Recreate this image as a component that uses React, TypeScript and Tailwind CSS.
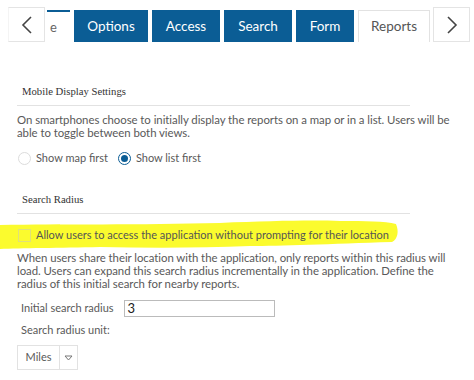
import React from 'react';

const tabs = ['Options', 'Access', 'Search', 'Form'];

function Heading({ children }: { children: React.ReactNode }) {
  return (
    <div className="border-b border-[#e2e2e2] mr-[64px] pl-[5px] pb-[5px] text-[10.7px] leading-[17px] text-[#333]" style={{ fontFamily: '"Liberation Serif", serif' }}>
      {children}
    </div>
  );
}

export default function App() {
  return (
    <div className="relative w-[474px] h-[380px] overflow-hidden bg-white text-[#595959]" style={{ fontFamily: 'Lato, "Open Sans", sans-serif' }}>
      {/* tab strip */}
      <div className="flex items-end pt-[7px] pl-[8px]">
        <button className="w-[37px] h-[35px] border border-[#e4e4e4] border-l-[#f4f4f4] bg-white flex items-center justify-center text-[#444]">
          <svg width="12" height="18" viewBox="0 0 12 18" fill="none" stroke="currentColor" strokeWidth="1.6">
            <path d="M10 1 L2 9 L10 17" />
          </svg>
        </button>
        <div className="w-[23px] h-[32px] border-t-2 border-[#0b5d95] ml-[2px] bg-white text-[13px] pl-[3px] leading-[30px] text-[#666]">e</div>
        {tabs.map((t, i) => (
          <div key={t} className={`h-[32px] bg-[#0b5d95] text-white text-[13.5px] flex items-center justify-center ${i === 0 ? 'ml-[4px] w-[74px]' : i === 3 ? 'ml-[4px] w-[58px]' : 'ml-[4px] w-[68px]'}`}>
            {t}
          </div>
        ))}
        <div className="ml-[4px] w-[72px] h-[32px] border border-b-0 border-[#e2e2e2] bg-white text-[13.5px] text-[#555] flex items-center justify-center">Reports</div>
        <button className="ml-[3px] w-[37px] h-[35px] border border-[#e4e4e4] bg-white flex items-center justify-center text-[#444]">
          <svg width="12" height="18" viewBox="0 0 12 18" fill="none" stroke="currentColor" strokeWidth="1.6">
            <path d="M2 1 L10 9 L2 17" />
          </svg>
        </button>
      </div>

      <div className="pl-[17px] pt-[41px]">
        <Heading>Mobile Display Settings</Heading>
        <p className="mt-[7px] text-[11.4px] leading-[13px] pr-[20px] tracking-[-0.05px]">
          On smartphones choose to initially display the reports on a map or in a list. Users will be able to toggle between both views.
        </p>
        <div className="mt-[11px] flex items-center text-[11px] leading-[16px]">
          <span className="w-[13px] h-[13px] rounded-full border border-[#dcdcdc] ml-[1px]" />
          <span className="ml-[5px]">Show map first</span>
          <span className="ml-[10px] w-[13px] h-[13px] rounded-full border border-[#0b5d95] flex items-center justify-center">
            <span className="w-[7px] h-[7px] rounded-full bg-[#0b5d95]" />
          </span>
          <span className="ml-[5px]">Show list first</span>
        </div>

        <div className="mt-[25px]">
          <Heading>Search Radius</Heading>
        </div>

        <div className="relative mt-[8px] -ml-[17px] pl-[18px] h-[26px] flex items-center">
          <svg className="absolute left-0 top-[-3px]" width="400" height="32" viewBox="0 0 400 32">
            <path d="M0 6 C60 5 140 6 220 4 C270 2 310 1 340 2 C365 2 385 2 396 5 C399 12 398 20 392 23 C330 25 280 27 250 27 C200 29 150 29 100 28 C60 29 20 29 0 30 Z" fill="#fbfb2e" />
          </svg>
          <span className="relative w-[13px] h-[13px] border border-[#e0e07a]" />
          <span className="relative ml-[5px] text-[11px] text-[#555]">Allow users to access the application without prompting for their location</span>
        </div>

        <p className="mt-[3px] text-[11.4px] leading-[13px] pr-[20px] tracking-[-0.05px]">
          When users share their location with the application, only reports within this radius will load. Users can expand this search radius incrementally in the application. Define the radius of this initial search for nearby reports.
        </p>

        <div className="mt-[10px] flex items-center pl-[4px] text-[11px]">
          <span>Initial search radius</span>
          <div className="ml-[10px] w-[151px] h-[17px] border border-[#bbb] text-[13px] leading-[15px] pl-[3px] text-[#222]">3</div>
        </div>
        <div className="mt-[5px] pl-[4px] text-[11px] leading-[15px]">Search radius unit:</div>

        <div className="mt-[8px] w-[61px] h-[25px] border border-[#e2e2e2] flex items-center text-[11px]">
          <span className="w-[41px] text-center">Miles</span>
          <span className="h-full border-l border-[#e2e2e2] flex-1 flex items-center justify-center">
            <svg width="9" height="6" viewBox="0 0 9 6" fill="none" stroke="#777" strokeWidth="1">
              <path d="M1 1 L4.5 5 L8 1 Z" />
            </svg>
          </span>
        </div>
      </div>
    </div>
  );
}
